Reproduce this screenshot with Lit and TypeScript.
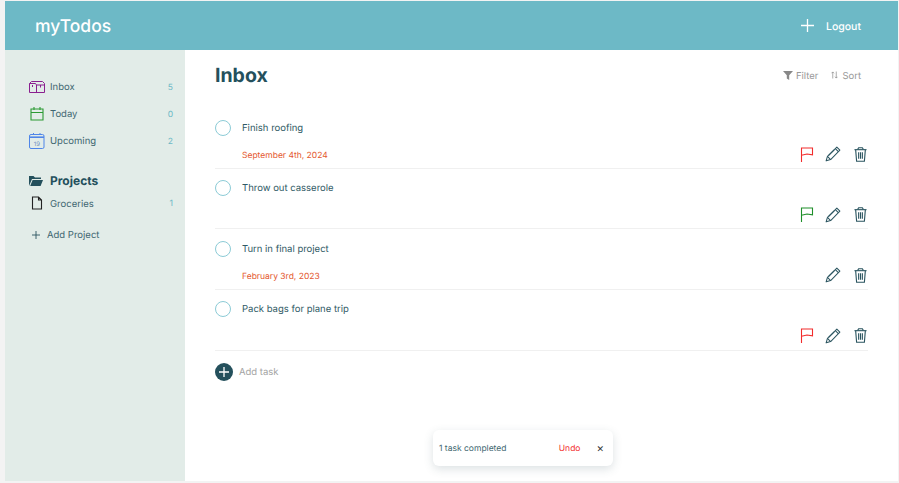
import { LitElement, html, css, svg } from "lit";
import { customElement } from "lit/decorators.js";

const flag = (c: string) => svg`<svg class="ic" width="14" height="15" viewBox="0 0 14 15" fill="none" stroke="${c}" stroke-width="1.1"><path d="M1.5 15V1H12.5V7.8L7 7 1.5 8.2"/></svg>`;
const pencil = svg`<svg class="ic pen" width="16" height="16" viewBox="0 0 17 17" fill="none" stroke="#2b5560" stroke-width="1.1" stroke-linejoin="round"><path d="M1.2 15.8 2.6 11 12.6 1.2 15.8 4.4 6 14.4Z"/><path d="M2.6 11 6 14.4M11 2.8 14.2 6M9.8 4 3.9 9.9"/></svg>`;
const trash = svg`<svg class="ic" width="13" height="15" viewBox="0 0 14 16" fill="none" stroke="#2b5560" stroke-width="1.2"><path d="M.5 2.8H13.5"/><path d="M4 2.5 5 .8H9L10 2.5"/><path d="M1.8 3 2.8 15.2H11.2L12.2 3"/><path d="M5 5.5V12.5M7 5.5V12.5M9 5.5V12.5"/></svg>`;

const tasks = [
  { t: "Finish roofing", d: "September 4th, 2024", f: "#f22c2c" },
  { t: "Throw out casserole", d: "", f: "#1f8f2a" },
  { t: "Turn in final project", d: "February 3rd, 2023", f: "" },
  { t: "Pack bags for plane trip", d: "", f: "#f22c2c" },
];

@customElement("app-root")
export class AppRoot extends LitElement {
  static styles = css`
    :host { display: block; height: 483px; width: 899px; box-sizing: border-box; background: #f3f3f3; padding: 1px 1px 2px 5px; font-family: Inter, "Liberation Sans", sans-serif; color: #2b5560; overflow: hidden; text-rendering: geometricPrecision; }
    .app { height: 480px; display: flex; flex-direction: column; background: #fff; position: relative; }
    .top { height: 49px; flex: none; background: #6db9c6; color: #fff; display: flex; align-items: center; padding: 0 37px 0 30px; }
    .logo { font-size: 17.5px; font-weight: 500; flex: 1; padding-top: 2px; }
    .plus { margin-right: 12px; display: block; }
    .logout { font-size: 10.5px; font-weight: 500; padding-top: 2px; }
    .body { flex: 1; display: flex; min-height: 0; }
    .side { width: 180px; flex: none; background: #e2ece8; box-sizing: border-box; padding: 23px 12px 0 24px; }
    .row { display: flex; align-items: center; height: 27px; font-size: 9.5px; color: #3e6670; }
    .row svg { flex: none; width: 16px; margin-right: 5px; }
    .row .lbl { flex: 1; padding-top: 2px; }
    .count { color: #6db9c6; font-size: 8.5px; padding-top: 2px; }
    .proj { display: flex; align-items: center; font-size: 12px; font-weight: 700; color: #24505c; margin-top: 13px; height: 27px; }
    .proj svg { margin-right: 7px; }
    .sub { height: 18px; }
    .add { display: flex; align-items: center; font-size: 9.5px; color: #3e6670; margin: 13px 0 0 3px; height: 19px; }
    .add svg { margin-right: 7px; }
    .add span { padding-top: 2px; }
    .main { flex: 1; min-width: 0; padding: 13px 30px 0 30px; }
    .head { display: flex; align-items: center; height: 24px; margin-bottom: 21px; padding-right: 7px; }
    h1 { margin: 0; font-size: 19.5px; font-weight: 700; flex: 1; color: #24505c; line-height: 24px; }
    .tool { display: flex; align-items: center; font-size: 9.5px; color: #999; margin-left: 13px; }
    .tool span { padding-top: 2px; }
    .tool svg { margin-right: 3px; }
    .sort { margin-left: 13px; }
    .sort svg { margin-right: 4px; }
    .task { height: 60.67px; border-bottom: 1px solid #f0f0f0; box-sizing: border-box; position: relative; }
    .t1 { display: flex; align-items: center; height: 39px; font-size: 9.5px; color: #2f5a65; }
    .t1 span { padding-top: 1px; }
    .circle { width: 14px; height: 14px; border: 1px solid #8ccbd6; border-radius: 50%; margin-right: 11px; flex: none; }
    .t2 { display: flex; align-items: center; height: 20px; margin-top: -1px; padding-left: 27px; }
    .date { flex: 1; color: #e4572e; font-size: 8.5px; }
    .icons { display: flex; align-items: center; gap: 11px; margin: -4px 1px 0 0; }
    .pen { margin-right: 2px; }
    .addtask { display: flex; align-items: center; font-size: 9.5px; color: #a3a3a3; height: 42px; }
    .addtask span { padding-top: 1px; }
    .bub { width: 18px; height: 18px; border-radius: 50%; background: #24505c; margin-right: 6px; display: flex; align-items: center; justify-content: center; }
    .toast { position: absolute; left: 428px; top: 429px; width: 180px; height: 36px; box-sizing: border-box; background: #fff; border-radius: 6px; box-shadow: 0 3px 10px rgba(60,90,100,.18); display: flex; align-items: center; padding: 2px 9px 0 6px; font-size: 8.5px; color: #3e6670; }
    .toast .m { flex: 1; }
    .undo { color: #f22c2c; margin-right: 16px; }
    .x { color: #333; font-size: 9px; }
    .num { font-size: 6px; fill: #6f8fc0; }
  `;

  render() {
    return html`<div class="app">
      <div class="top">
        <div class="logo">myTodos</div>
        <svg class="plus" width="13" height="13" viewBox="0 0 13 13" stroke="#fff" stroke-width="1.3"><path d="M6.5 0V13M0 6.5H13"/></svg>
        <div class="logout">Logout</div>
      </div>
      <div class="body">
        <div class="side">
          <div class="row">
            <svg width="16" height="12" viewBox="0 0 16 12" fill="none" stroke="#8a1f8f" stroke-width="1"><path d="M.5 11.5V2.5L2.5.5H13.5L15.5 2.5V11.5Z"/><path d="M.5 2.5H6.5L7.5 4V11.5M7.5 4H15.5M11.5 4V6.5M3.5 4V6"/></svg>
            <span class="lbl">Inbox</span><span class="count">5</span>
          </div>
          <div class="row">
            <svg width="16" height="14" viewBox="0 0 16 14" fill="none" stroke="#2b9a33" stroke-width="1.1"><path d="M2 2H14V13H2ZM2 5.5H14M5 0V3M11 0V3"/></svg>
            <span class="lbl">Today</span><span class="count">0</span>
          </div>
          <div class="row">
            <svg width="16" height="16" viewBox="0 0 16 16" fill="none"><rect x=".5" y="1.5" width="14.5" height="14" rx="1.5" stroke="#4f86e8"/><path d="M1 4.2H15" stroke="#4f86e8" stroke-width="1.6"/><path d="M4.5 0V2M11 0V2" stroke="#4f86e8"/><text class="num" x="7.8" y="12.5" text-anchor="middle">19</text></svg>
            <span class="lbl">Upcoming</span><span class="count">2</span>
          </div>
          <div class="proj">
            <svg width="14" height="11" viewBox="0 0 14 11" fill="#24505c"><path d="M0 11V1H4.5L6 2.5H12V4H3L0 11ZM1.2 11 3.6 5H14L11.6 11Z"/></svg>
            Projects
          </div>
          <div class="row sub">
            <svg width="16" height="14" viewBox="0 0 16 14" fill="none" stroke="#222" stroke-width="1.1"><path d="M3.5 1H9.5L12.5 4V13H3.5ZM9.5 1V4H12.5"/></svg>
            <span class="lbl">Groceries</span><span class="count">1</span>
          </div>
          <div class="add">
            <svg width="8" height="8" viewBox="0 0 8 8" stroke="#2b5560" stroke-width=".9"><path d="M4 0V8M0 4H8"/></svg>
            <span>Add Project</span>
          </div>
        </div>
        <div class="main">
          <div class="head">
            <h1>Inbox</h1>
            <div class="tool">
              <svg width="10" height="9" viewBox="0 0 10 9" fill="#888"><path d="M0 0H10L6.2 4.2V9L3.8 7.6V4.2Z"/></svg><span>Filter</span>
            </div>
            <div class="tool sort">
              <svg width="7" height="8" viewBox="0 0 8 8" fill="none" stroke="#888" stroke-width=".8"><path d="M2 8V.5M.5 2 2 .5 3.5 2M6 0V7.5M4.5 6 6 7.5 7.5 6"/></svg><span>Sort</span>
            </div>
          </div>
          ${tasks.map((t) => html`<div class="task">
            <div class="t1"><div class="circle"></div><span>${t.t}</span></div>
            <div class="t2">
              <div class="date">${t.d}</div>
              <div class="icons">${t.f ? flag(t.f) : ""}${pencil}${trash}</div>
            </div>
          </div>`)}
          <div class="addtask">
            <div class="bub"><svg width="10" height="10" viewBox="0 0 10 10" stroke="#fff" stroke-width="1.3"><path d="M5 0V10M0 5H10"/></svg></div>
            <span>Add task</span>
          </div>
        </div>
      </div>
      <div class="toast">
        <span class="m">1 task completed</span>
        <span class="undo">Undo</span>
        <span class="x">✕</span>
      </div>
    </div>`;
  }
}
